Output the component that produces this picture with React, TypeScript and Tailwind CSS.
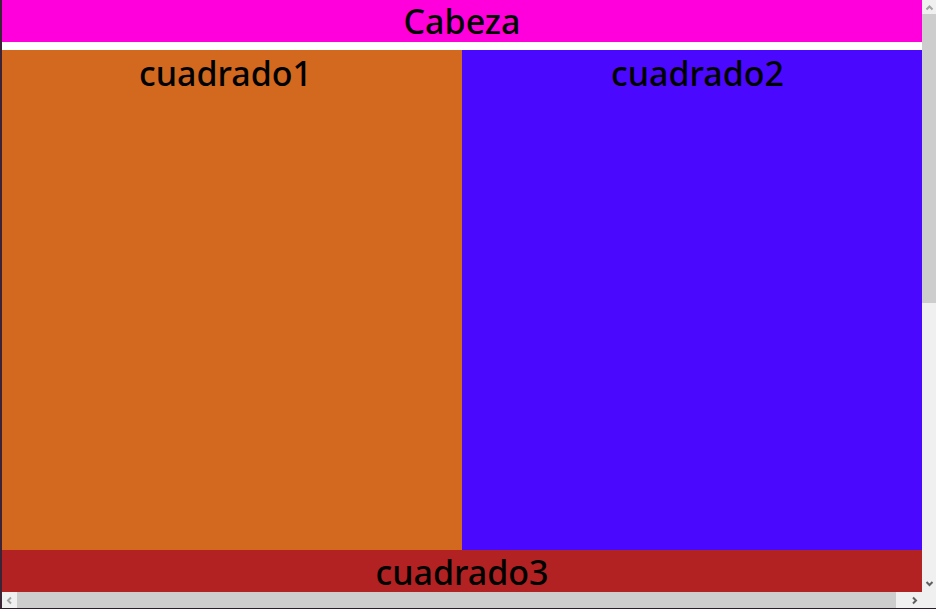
import React from "react";

function Chevron({ dir, color }: { dir: "up" | "down" | "left" | "right"; color: string }) {
  const paths: Record<string, string> = {
    up: "M1.5 6.5 L4.5 3.5 L7.5 6.5",
    down: "M1.5 3 L4.5 6 L7.5 3",
    left: "M6 1.5 L3 4.5 L6 7.5",
    right: "M3 1.5 L6 4.5 L3 7.5",
  };
  return (
    <svg width="9" height="9" viewBox="0 0 9 9">
      <path d={paths[dir]} fill="none" stroke={color} strokeWidth="2" />
    </svg>
  );
}

export default function App() {
  const font = { fontFamily: '"Noto Sans", "Open Sans", sans-serif' };
  return (
    <div className="flex h-[609px] w-[936px] flex-col overflow-hidden bg-[#2b1b2b]" style={font}>
      <div className="flex h-[608px]">
        {/* left window edge */}
        <div className="w-[2px] bg-[#3a2436]" />

        <div className="flex w-[920px] flex-col">
          <header className="flex h-[42px] items-center justify-center bg-[#ff00dd] text-[34px] font-medium leading-[42px] text-black">
            Cabeza
          </header>
          <div className="h-[8px] bg-white" />

          <div className="flex h-[500px]">
            <div className="flex w-[460px] justify-center bg-[#d2691e] pr-[13px] text-[34px] font-medium leading-[46px] text-black">
              cuadrado1
            </div>
            <div className="flex w-[460px] justify-center bg-[#4b08ff] pl-[11px] text-[34px] font-medium leading-[46px] text-black">
              cuadrado2
            </div>
          </div>

          <footer className="flex h-[42px] justify-center bg-[#b22222] pt-[3px] text-[34px] font-medium leading-[39px] text-black">
            cuadrado3
          </footer>

          {/* horizontal scrollbar */}
          <div className="flex h-[16px] bg-[#f0f0f0]">
            <div className="flex w-[15px] items-center justify-center">
              <Chevron dir="left" color="#a3a3a3" />
            </div>
            <div className="w-[879px] bg-[#cdcdcd]" />
            <div className="flex flex-1 items-center justify-end pr-[3px]">
              <Chevron dir="right" color="#606060" />
            </div>
          </div>
        </div>

        {/* vertical scrollbar */}
        <div className="flex w-[14px] flex-col bg-[#f0f0f0]">
          <div className="flex h-[14px] items-center justify-center">
            <Chevron dir="up" color="#a3a3a3" />
          </div>
          <div className="h-[289px] bg-[#cdcdcd]" />
          <div className="flex-1" />
          <div className="flex h-[17px] items-center justify-center">
            <Chevron dir="down" color="#606060" />
          </div>
          <div className="h-[16px]" />
        </div>
      </div>
      <div className="h-[1px] bg-[#2b1b2b]" />
    </div>
  );
}
